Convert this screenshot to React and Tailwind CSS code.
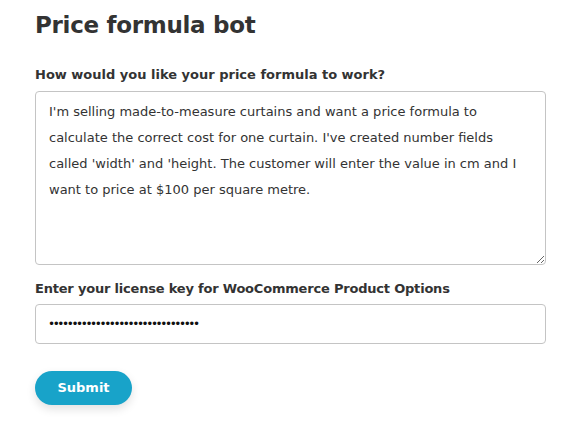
import React from 'react'

const text =
  "I'm selling made-to-measure curtains and want a price formula to calculate the correct cost for one curtain. I've created number fields called 'width' and 'height. The customer will enter the value in cm and I want to price at $100 per square metre."

export default function App() {
  return (
    <div className="min-h-[423px] bg-white px-[35px] pt-[9px] text-[#333] [font-family:'DejaVu_Sans',sans-serif]">
      <h1 className="text-[23px] font-bold leading-[32px] tracking-[-0.3px] text-[#333]">Price formula bot</h1>

      <form className="mt-[25px] flex w-[511px] flex-col" onSubmit={(e) => e.preventDefault()}>
        <label className="text-[13px] font-bold leading-[18px]">How would you like your price formula to work?</label>
        <textarea
          className="mt-[7px] h-[174px] w-full rounded-[4px] border border-[#c4c4c4] px-[13px] py-[7px] text-[13px] leading-[26px] text-[#333] outline-none"
          defaultValue={text}
        />

        <label className="mt-[15px] text-[13px] font-bold leading-[18px] tracking-[-0.2px]">Enter your license key for WooCommerce Product Options</label>
        <input
          type="password"
          className="mt-[6px] h-[40px] w-full rounded-[4px] border border-[#c4c4c4] px-[12px] text-[12px] tracking-[-2.4px] text-[#111] outline-none"
          defaultValue="abcdefghijklmnopqrstuvwxyz012345"
        />

        <div className="mt-[27px]">
          <button
            type="submit"
            className="h-[34px] w-[97px] rounded-full bg-[#18a3c9] text-[13px] font-bold text-white shadow-[0_4px_10px_rgba(0,0,0,0.12)]"
          >
            Submit
          </button>
        </div>
      </form>
    </div>
  )
}
